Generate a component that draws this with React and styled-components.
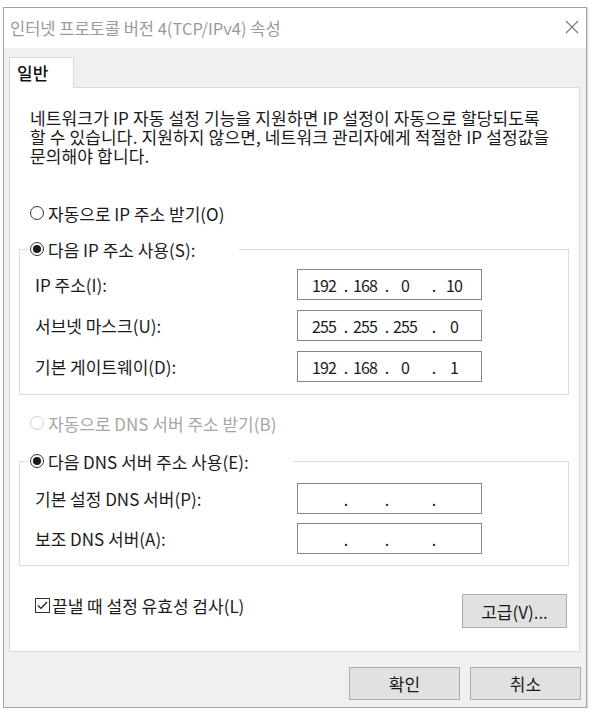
import React from 'react';
import styled, { createGlobalStyle } from 'styled-components';

const Global = createGlobalStyle`
  html, body { margin: 0; padding: 0; background: #ffffff; }
  body { font-family: "Noto Sans CJK KR", "Noto Sans", sans-serif; }
  * { box-sizing: border-box; }
`;

const Window = styled.div`
  margin: 7px 0 0 3px;
  width: 584px;
  height: 701px;
  border: 1px solid #a3a3a3;
  box-shadow: 1px 1px 2px rgba(0, 0, 0, 0.18);
  background: #f0f0f0;
  display: flex;
  flex-direction: column;
  font-size: 17px;
  color: #1a1a1a;
`;

const TitleBar = styled.div`
  height: 40px;
  flex: none;
  background: #ffffff;
  display: flex;
  align-items: center;
  justify-content: space-between;
  padding: 0 7px 0 6px;
`;

const TitleText = styled.span`
  color: #9a9a9a;
  font-size: 16.5px;
  white-space: nowrap;
`;

const CloseIcon = styled.svg`
  width: 14px;
  height: 14px;
  margin-top: -3px;
`;

const Body = styled.div`
  flex: 1;
  display: flex;
  flex-direction: column;
  padding: 9px 6px 0 5px;
`;

const TabStrip = styled.div`
  display: flex;
  height: 31px;
  margin-bottom: -1px;
  position: relative;
  z-index: 1;
`;

const Tab = styled.div`
  width: 65px;
  height: 31px;
  background: #ffffff;
  border: 1px solid #d9d9d9;
  border-bottom: none;
  padding-left: 7px;
  line-height: 29px;
  color: #111;
  font-weight: 500;
`;

const Panel = styled.div`
  height: 565px;
  background: #ffffff;
  border: 1px solid #d9d9d9;
  display: flex;
  flex-direction: column;
`;

const Description = styled.p`
  margin: 20px 0 0 20px;
  line-height: 19px;
  letter-spacing: 0.15px;
  white-space: nowrap;
`;

const OptionRow = styled.label`
  display: flex;
  align-items: center;
  height: 22px;
  gap: 4px;
  margin: ${(p) => p.$margin || '0'};
  color: ${(p) => (p.$disabled ? '#a6a6a6' : '#1a1a1a')};
  white-space: nowrap;
`;

const RadioCircle = styled.span`
  width: 14px;
  height: 14px;
  flex: none;
  border-radius: 50%;
  border: 1px solid ${(p) => (p.$disabled ? '#cfcfcf' : '#333333')};
  background: #ffffff;
  display: flex;
  align-items: center;
  justify-content: center;
  &::after {
    content: '';
    width: 8px;
    height: 8px;
    border-radius: 50%;
    background: #1a1a1a;
    display: ${(p) => (p.$checked ? 'block' : 'none')};
  }
`;

const Group = styled.fieldset`
  margin: ${(p) => p.$top} 10px 0 9px;
  padding: 0;
  border: 1px solid #dcdcdc;
  min-width: 0;
`;

const Legend = styled.legend`
  margin-left: 8px;
  padding: 0 44px 0 2px;
  height: 24px;
  display: flex;
  align-items: center;
`;

const FieldRows = styled.div`
  display: flex;
  flex-direction: column;
  gap: ${(p) => p.$gap};
  padding: ${(p) => p.$padding};
`;

const FieldRow = styled.div`
  display: grid;
  grid-template-columns: 262px 185px;
  align-items: center;
  height: 31px;
`;

const FieldLabel = styled.span`
  white-space: nowrap;
`;

const IpBox = styled.div`
  width: 185px;
  height: 31px;
  border: 1px solid #868686;
  background: #ffffff;
  display: grid;
  grid-template-columns: 4px 44px 0 38px 6px 30px 28px 12px;
  align-items: center;
  font-size: 16px;
`;

const Octet = styled.span`
  justify-self: center;
  white-space: nowrap;
  letter-spacing: -0.8px;
`;

const Dot = styled.span`
  justify-self: center;
  white-space: nowrap;
`;

const BottomRow = styled.div`
  display: flex;
  justify-content: space-between;
  align-items: flex-start;
  margin-top: 28px;
  padding: 0 12px 0 25px;
`;

const CheckRow = styled.label`
  display: flex;
  align-items: center;
  gap: 2px;
  height: 20px;
  margin-top: 1px;
  white-space: nowrap;
`;

const CheckBox = styled.span`
  width: 15px;
  height: 15px;
  border: 1px solid #333333;
  background: #ffffff;
  display: flex;
  align-items: center;
  justify-content: center;
`;

const Button = styled.button`
  width: ${(p) => p.$width}px;
  height: ${(p) => p.$height}px;
  background: #e1e1e1;
  border: 1px solid #adadad;
  font-family: inherit;
  font-size: 17px;
  color: #1a1a1a;
  padding: 0;
`;

const Footer = styled.div`
  display: flex;
  justify-content: flex-end;
  gap: 10px;
  padding: 15px 0 0 0;
  margin-right: -1px;
`;

const IpField = ({ value }) => {
  const parts = value ? value.split('.') : ['', '', '', ''];
  return (
    <IpBox>
      <span />
      <Octet>{parts[0]}</Octet>
      <Dot>.</Dot>
      <Octet>{parts[1]}</Octet>
      <Dot>.</Dot>
      <Octet>{parts[2]}</Octet>
      <Dot>.</Dot>
      <Octet>{parts[3]}</Octet>
    </IpBox>
  );
};

export default function App() {
  return (
    <>
      <Global />
      <Window>
        <TitleBar>
          <TitleText>인터넷 프로토콜 버전 4(TCP/IPv4) 속성</TitleText>
          <CloseIcon viewBox="0 0 14 14">
            <path d="M1 1 L13 13 M13 1 L1 13" stroke="#7a7a7a" strokeWidth="1.1" fill="none" />
          </CloseIcon>
        </TitleBar>
        <Body>
          <TabStrip>
            <Tab>일반</Tab>
          </TabStrip>
          <Panel>
            <Description>
              네트워크가 IP 자동 설정 기능을 지원하면 IP 설정이 자동으로 할당되도록
              <br />
              할 수 있습니다. 지원하지 않으면, 네트워크 관리자에게 적절한 IP 설정값을
              <br />
              문의해야 합니다.
            </Description>
            <OptionRow $margin="37px 0 0 20px">
              <RadioCircle />
              자동으로 IP 주소 받기(O)
            </OptionRow>
            <Group $top="13px">
              <Legend>
                <OptionRow>
                  <RadioCircle $checked />
                  다음 IP 주소 사용(S):
                </OptionRow>
              </Legend>
              <FieldRows $gap="10px" $padding="8px 0 12px 15px">
                <FieldRow>
                  <FieldLabel>IP 주소(I):</FieldLabel>
                  <IpField value="192.168.0.10" />
                </FieldRow>
                <FieldRow>
                  <FieldLabel>서브넷 마스크(U):</FieldLabel>
                  <IpField value="255.255.255.0" />
                </FieldRow>
                <FieldRow>
                  <FieldLabel>기본 게이트웨이(D):</FieldLabel>
                  <IpField value="192.168.0.1" />
                </FieldRow>
              </FieldRows>
            </Group>
            <OptionRow $margin="17px 0 0 20px" $disabled>
              <RadioCircle $disabled />
              자동으로 DNS 서버 주소 받기(B)
            </OptionRow>
            <Group $top="15px">
              <Legend>
                <OptionRow>
                  <RadioCircle $checked />
                  다음 DNS 서버 주소 사용(E):
                </OptionRow>
              </Legend>
              <FieldRows $gap="9px" $padding="10px 0 11px 15px">
                <FieldRow>
                  <FieldLabel>기본 설정 DNS 서버(P):</FieldLabel>
                  <IpField />
                </FieldRow>
                <FieldRow>
                  <FieldLabel>보조 DNS 서버(A):</FieldLabel>
                  <IpField />
                </FieldRow>
              </FieldRows>
            </Group>
            <BottomRow>
              <CheckRow>
                <CheckBox>
                  <svg width="11" height="9" viewBox="0 0 11 9">
                    <path d="M1 4.5 L4 7.5 L10 1" stroke="#1a1a1a" strokeWidth="1.2" fill="none" />
                  </svg>
                </CheckBox>
                끝낼 때 설정 유효성 검사(L)
              </CheckRow>
              <Button $width={105} $height={34}>고급(V)...</Button>
            </BottomRow>
          </Panel>
          <Footer>
            <Button $width={111} $height={33}>확인</Button>
            <Button $width={111} $height={33}>취소</Button>
          </Footer>
        </Body>
      </Window>
    </>
  );
}
